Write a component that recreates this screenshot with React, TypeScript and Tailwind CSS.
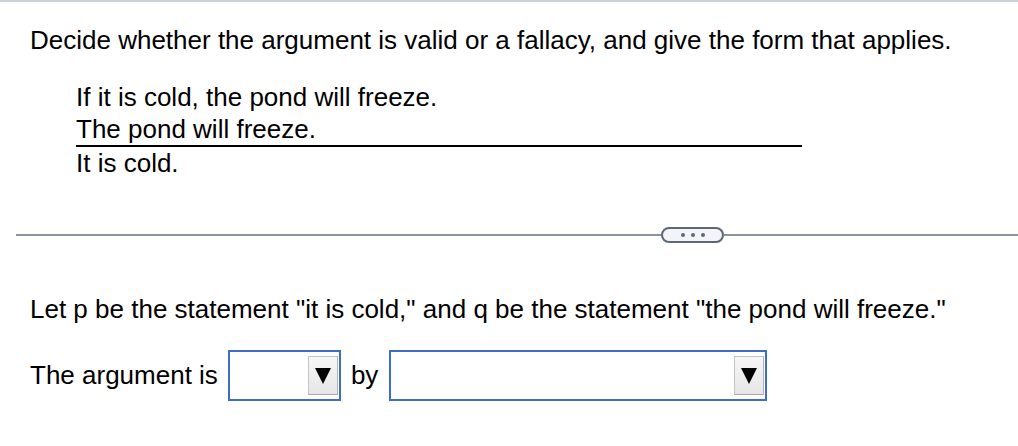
import React from 'react';

const font = { fontFamily: '"Liberation Sans", Arial, sans-serif' };

const Dropdown: React.FC<{ width: string }> = ({ width }) => (
  <div className={`${width} h-[51px] border-2 border-[#3f6cc8] bg-white flex items-center justify-end pr-[1px]`}>
    <div className="w-[30px] h-[39px] border border-[#c4c4c4] border-b-[#a9a9a9] border-r-[#b3b3b3] bg-gradient-to-b from-[#f7f7f7] to-[#e6e6e6] flex items-center justify-center">
      <svg width="18" height="20" viewBox="0 0 18 20">
        <polygon points="1,2 17,2 9,18" fill="#000" />
      </svg>
    </div>
  </div>
);

export default function App() {
  return (
    <div className="w-[1018px] h-[446px] bg-white text-black overflow-hidden border-t-2 border-[#ccd0da]" style={font}>
      <div className="pl-[30px] pt-[23px] text-[26px] leading-[30px]">
        Decide whether the argument is valid or a fallacy, and give the form that applies.
      </div>

      <div className="ml-[76px] mt-[26px] w-[726px] text-[26px]">
        <div className="border-b-2 border-black leading-8">
          <div>If it is cold, the pond will freeze.</div>
          <div>The pond will freeze.</div>
        </div>
        <div className="leading-8">It is cold.</div>
      </div>

      <div className="mt-[48px] ml-[16px] flex items-center h-4">
        <div className="flex-1 h-[2px] bg-[#8a93a0]" />
        <div className="w-[63px] h-4 rounded-full border-2 border-[#5d6877] bg-[#f2f4f7] flex items-center justify-center gap-[6px]">
          <span className="w-1 h-1 rounded-full bg-[#5d6877]" />
          <span className="w-1 h-1 rounded-full bg-[#5d6877]" />
          <span className="w-1 h-1 rounded-full bg-[#5d6877]" />
        </div>
        <div className="w-[294px] h-[2px] bg-[#8a93a0]" />
      </div>

      <div className="pl-[30px] mt-[51px] text-[26px] leading-[30px]">
        Let p be the statement "it is cold," and q be the statement "the pond will freeze."
      </div>

      <div className="pl-[30px] mt-[26px] flex items-center text-[26px]">
        <span>The argument is</span>
        <div className="ml-[10px]">
          <Dropdown width="w-[113px]" />
        </div>
        <span className="ml-[10px]">by</span>
        <div className="ml-[11px]">
          <Dropdown width="w-[378px]" />
        </div>
      </div>
    </div>
  );
}
